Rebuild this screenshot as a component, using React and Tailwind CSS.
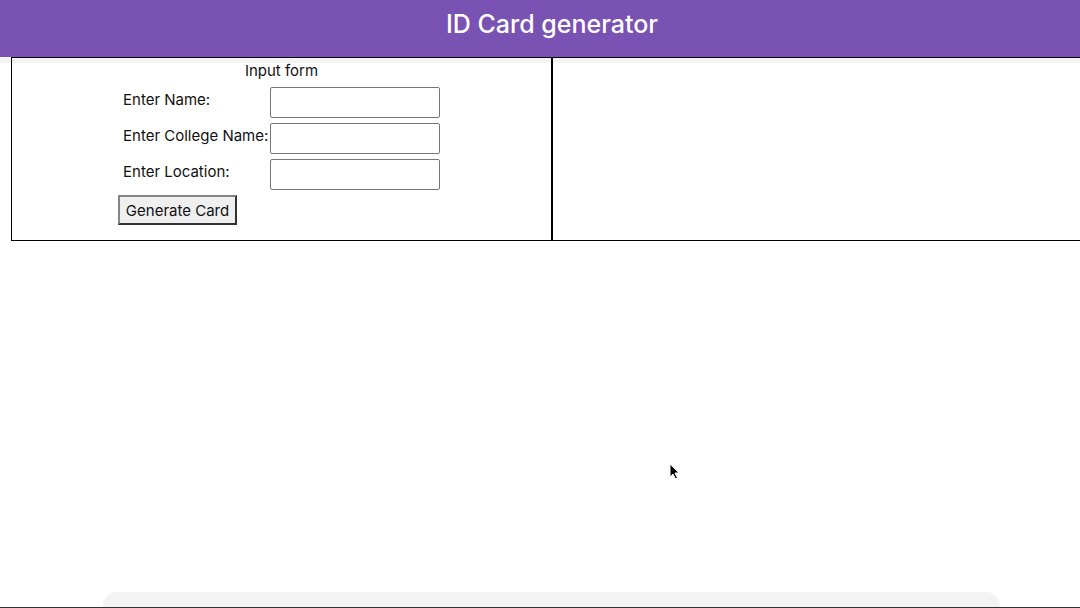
import React from "react";

const fields = [
  { id: "name", label: "Enter Name:" },
  { id: "college", label: "Enter College Name:" },
  { id: "location", label: "Enter Location:" },
];

export default function App() {
  return (
    <div className="relative h-[608px] w-full overflow-hidden bg-white font-['Inter',sans-serif] text-[#111]">
      <div className="flex h-full w-[1104px] flex-col">
        {/* Header */}
        <header className="relative z-0 flex h-[57px] shrink-0 items-center justify-center bg-[#7952b3] pb-[7px] text-[25px] font-medium text-white shadow-[0_6px_0_#f4f4f4]">
          ID Card generator
        </header>

        {/* Form + preview */}
        <div className="relative z-10 flex pl-[11px]">
          <div className="h-[184px] w-[541px] border border-black">
            <p className="pt-[4px] text-center text-[15px] leading-[18px]">Input form</p>
            <form className="ml-[106px] mt-[7px] w-[326px]" onSubmit={(e) => e.preventDefault()}>
              <div className="grid grid-cols-[152px_174px] gap-y-[5px]">
                {fields.map((f) => (
                  <React.Fragment key={f.id}>
                    <label htmlFor={f.id} className="self-start pl-[5px] pt-[4px] text-[15px] leading-[18px]">
                      {f.label}
                    </label>
                    <input
                      id={f.id}
                      type="text"
                      className="h-[31px] w-[170px] rounded-[2px] border border-[#767676] bg-white px-1 text-[15px]"
                    />
                  </React.Fragment>
                ))}
              </div>
              <button
                type="submit"
                className="mt-[5px] h-[30px] w-[119px] border-2 border-t-[#858585] border-l-[#858585] border-b-[#333] border-r-[#333] bg-[#efefef] text-[15px] leading-none"
              >
                Generate Card
              </button>
            </form>
          </div>
          <div className="h-[184px] flex-1 border border-black"></div>
        </div>

        <div className="flex-1"></div>

        {/* Footer edge */}
        <div className="shrink-0">
          <div className="ml-[103px] h-[15px] w-[897px] rounded-t-[14px] bg-[#f3f3f3]"></div>
          <div className="h-px bg-[#333]"></div>
        </div>
      </div>

      {/* mouse pointer */}
      <svg className="absolute left-[669px] top-[463px]" width="11" height="17" viewBox="0 0 11 17">
        <path d="M1 1 L1 14 L4 11 L6.5 16 L8.5 15 L6 10 L10 10 Z" fill="#000" stroke="#fff" strokeWidth="1" />
      </svg>
    </div>
  );
}
